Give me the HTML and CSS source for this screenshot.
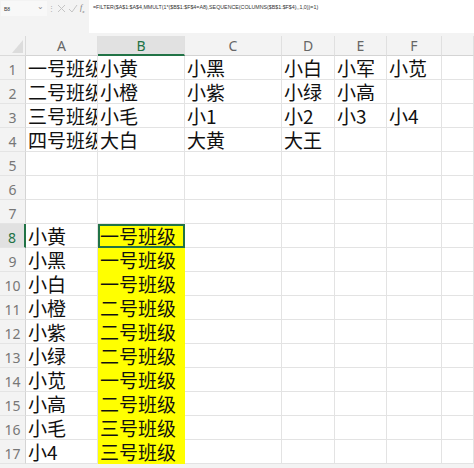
FILE: index.html
```html
<!DOCTYPE html>
<html lang="zh">
<head>
<meta charset="utf-8">
<link rel="stylesheet" href="styles.css">
</head>
<body>
<div class="toolbar">
  <div class="namebox"><span class="ref">B8</span><span class="chev">&#8964;</span></div>
  <div class="dots">&#8942;</div>
  <div class="fbtns">
    <svg class="ico" width="9" height="9" viewBox="0 0 9 9"><path d="M1 1 L8 8 M8 1 L1 8" stroke="#c4c4c4" stroke-width="1" fill="none"/></svg>
    <svg class="ico" width="10" height="9" viewBox="0 0 10 9"><path d="M1 5 L4 8 L9 1" stroke="#c4c4c4" stroke-width="1" fill="none"/></svg>
    <span class="fx">f<sub>x</sub></span>
  </div>
  <div class="formula">=FILTER($A$1:$A$4,MMULT(1*($B$1:$F$4=A8),SEQUENCE(COLUMNS($B$1:$F$4),,1,0))=1)</div>
</div>
<div class="sheet">
  <div class="corner"><span class="tri"></span></div>
  <div class="ch">A</div><div class="ch sel">B</div><div class="ch">C</div><div class="ch">D</div><div class="ch">E</div><div class="ch">F</div><div class="ch"></div>

  <div class="rh">1</div><div class="c">一号班级</div><div class="c">小黄</div><div class="c">小黑</div><div class="c">小白</div><div class="c">小军</div><div class="c">小苋</div><div class="c"></div>
  <div class="rh">2</div><div class="c">二号班级</div><div class="c">小橙</div><div class="c">小紫</div><div class="c">小绿</div><div class="c">小高</div><div class="c"></div><div class="c"></div>
  <div class="rh">3</div><div class="c">三号班级</div><div class="c">小毛</div><div class="c">小1</div><div class="c">小2</div><div class="c">小3</div><div class="c">小4</div><div class="c"></div>
  <div class="rh">4</div><div class="c">四号班级</div><div class="c">大白</div><div class="c">大黄</div><div class="c">大王</div><div class="c"></div><div class="c"></div><div class="c"></div>
  <div class="rh">5</div><div class="c"></div><div class="c"></div><div class="c"></div><div class="c"></div><div class="c"></div><div class="c"></div><div class="c"></div>
  <div class="rh">6</div><div class="c"></div><div class="c"></div><div class="c"></div><div class="c"></div><div class="c"></div><div class="c"></div><div class="c"></div>
  <div class="rh">7</div><div class="c"></div><div class="c"></div><div class="c"></div><div class="c"></div><div class="c"></div><div class="c"></div><div class="c"></div>
  <div class="rh sel">8</div><div class="c">小黄</div><div class="c y active">一号班级</div><div class="c"></div><div class="c"></div><div class="c"></div><div class="c"></div><div class="c"></div>
  <div class="rh">9</div><div class="c">小黑</div><div class="c y">一号班级</div><div class="c"></div><div class="c"></div><div class="c"></div><div class="c"></div><div class="c"></div>
  <div class="rh">10</div><div class="c">小白</div><div class="c y">一号班级</div><div class="c"></div><div class="c"></div><div class="c"></div><div class="c"></div><div class="c"></div>
  <div class="rh">11</div><div class="c">小橙</div><div class="c y">二号班级</div><div class="c"></div><div class="c"></div><div class="c"></div><div class="c"></div><div class="c"></div>
  <div class="rh">12</div><div class="c">小紫</div><div class="c y">二号班级</div><div class="c"></div><div class="c"></div><div class="c"></div><div class="c"></div><div class="c"></div>
  <div class="rh">13</div><div class="c">小绿</div><div class="c y">二号班级</div><div class="c"></div><div class="c"></div><div class="c"></div><div class="c"></div><div class="c"></div>
  <div class="rh">14</div><div class="c">小苋</div><div class="c y">一号班级</div><div class="c"></div><div class="c"></div><div class="c"></div><div class="c"></div><div class="c"></div>
  <div class="rh">15</div><div class="c">小高</div><div class="c y">二号班级</div><div class="c"></div><div class="c"></div><div class="c"></div><div class="c"></div><div class="c"></div>
  <div class="rh">16</div><div class="c">小毛</div><div class="c y">三号班级</div><div class="c"></div><div class="c"></div><div class="c"></div><div class="c"></div><div class="c"></div>
  <div class="rh">17</div><div class="c">小4</div><div class="c y">三号班级</div><div class="c"></div><div class="c"></div><div class="c"></div><div class="c"></div><div class="c"></div>
</div>
</body>
</html>
```

FILE: styles.css
```css
* { box-sizing: border-box; }
html, body { margin: 0; padding: 0; background: #f3f3f3; }
body {
  width: 474px;
  height: 468px;
  overflow: hidden;
  font-family: "Noto Sans CJK SC", "Noto Sans", sans-serif;
}
.toolbar {
  height: 33px;
  display: flex;
  align-items: flex-start;
  background: #f3f3f3;
  margin-bottom: 3px;
}
.namebox {
  width: 46px;
  height: 15px;
  margin: 1px 0 0 1px;
  background: #f8f8f8;
  display: flex;
  align-items: center;
  justify-content: space-between;
  padding: 0 3px;
  font-family: "Liberation Sans", sans-serif;
}
.ref { font-size: 5px; color: #333; }
.chev { font-size: 8px; color: #888; line-height: 8px; margin-top: -3px; }
.dots { width: 8px; font-size: 7px; color: #aaa; padding-top: 3px; text-align: center; }
.fbtns {
  width: 32px;
  height: 16px;
  display: flex;
  align-items: center;
  gap: 2px;
  padding-left: 2px;
}
.fx { font-family: "Liberation Serif", serif; font-style: italic; font-size: 8px; color: #777; }
.fx sub { font-size: 5px; }
.formula {
  flex: 1;
  height: 33px;
  background: #ffffff;
  margin-left: 2px;
  padding: 4px 0 0 4px;
  font-family: "Liberation Sans", sans-serif;
  font-size: 5.3px;
  color: #333;
  white-space: nowrap;
  overflow: hidden;
}
.sheet {
  display: grid;
  grid-template-columns: 26px 72px 87px 97px 53px 52px 55px 1fr;
  grid-template-rows: 20px repeat(17, 24px);
  background: #ffffff;
}
.corner {
  background: #f3f3f3;
  border-right: 1px solid #dadada;
  border-bottom: 1px solid #dadada;
  position: relative;
}
.tri {
  position: absolute;
  right: 2px;
  bottom: 2px;
  width: 0;
  height: 0;
  border-left: 11px solid transparent;
  border-bottom: 13px solid #dcdcdc;
}
.ch {
  background: #f3f3f3;
  border-right: 1px solid #e0e0e0;
  border-bottom: 1px solid #d4d4d4;
  font-family: "Noto Sans", sans-serif;
  font-size: 14px;
  line-height: 19px;
  color: #666;
  text-align: center;
}
.ch.sel {
  background: #e1e1e1;
  color: #217346;
  border-bottom: 2px solid #217346;
}
.rh {
  background: #f3f3f3;
  border-right: 1px solid #d4d4d4;
  border-bottom: 1px solid #e4e4e4;
  font-family: "Noto Sans", sans-serif;
  font-size: 14px;
  color: #777;
  text-align: center;
  padding-top: 5px;
  line-height: 18px;
}
.rh.sel {
  background: #e1e1e1;
  color: #217346;
  border-right: 2px solid #217346;
}
.c {
  border-right: 1px solid #e3e3e3;
  border-bottom: 1px solid #e3e3e3;
  font-size: 19px;
  line-height: 22px;
  padding: 1px 0 0 2px;
  white-space: nowrap;
  overflow-x: clip;
  overflow-y: visible;
  color: #111;
}
.c.y {
  background: #ffff00;
  border-color: #ffff00;
}
.c.active {
  border: 1px solid #217346;
  box-shadow: inset 0 0 0 1px #217346;
  padding: 0 0 0 1px;
}
```
